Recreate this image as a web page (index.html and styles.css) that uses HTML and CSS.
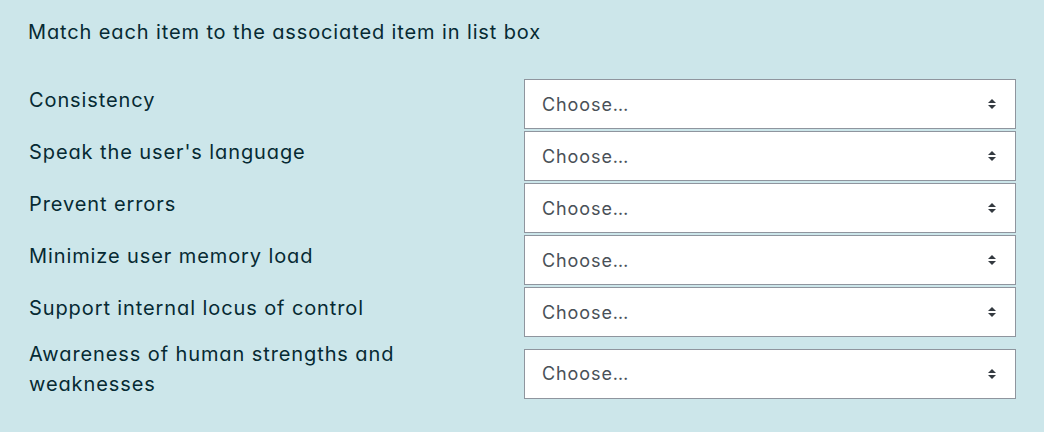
FILE: index.html
```html
<!DOCTYPE html>
<html lang="en">
<head>
<meta charset="utf-8">
<title>Match question</title>
<link rel="stylesheet" href="styles.css">
</head>
<body>
<div class="que">
  <div class="qtext">Match each item to the associated item in list box</div>
  <div class="answers">
    <div class="row">
      <div class="label">Consistency</div>
      <div class="select"><span class="value">Choose…</span><svg class="arrows" width="8" height="10" viewBox="0 0 4 5"><path d="M2 0L0 2h4zm0 5L0 3h4z"/></svg></div>
    </div>
    <div class="row">
      <div class="label">Speak the user's language</div>
      <div class="select"><span class="value">Choose…</span><svg class="arrows" width="8" height="10" viewBox="0 0 4 5"><path d="M2 0L0 2h4zm0 5L0 3h4z"/></svg></div>
    </div>
    <div class="row">
      <div class="label">Prevent errors</div>
      <div class="select"><span class="value">Choose…</span><svg class="arrows" width="8" height="10" viewBox="0 0 4 5"><path d="M2 0L0 2h4zm0 5L0 3h4z"/></svg></div>
    </div>
    <div class="row">
      <div class="label">Minimize user memory load</div>
      <div class="select"><span class="value">Choose…</span><svg class="arrows" width="8" height="10" viewBox="0 0 4 5"><path d="M2 0L0 2h4zm0 5L0 3h4z"/></svg></div>
    </div>
    <div class="row">
      <div class="label">Support internal locus of control</div>
      <div class="select"><span class="value">Choose…</span><svg class="arrows" width="8" height="10" viewBox="0 0 4 5"><path d="M2 0L0 2h4zm0 5L0 3h4z"/></svg></div>
    </div>
    <div class="row">
      <div class="label">Awareness of human strengths and weaknesses</div>
      <div class="select"><span class="value">Choose…</span><svg class="arrows" width="8" height="10" viewBox="0 0 4 5"><path d="M2 0L0 2h4zm0 5L0 3h4z"/></svg></div>
    </div>
  </div>
</div>
</body>
</html>
```

FILE: styles.css
```css
html, body {
  margin: 0;
  padding: 0;
}
body {
  background: #cce6ea;
  font-family: Inter, "Noto Sans", sans-serif;
  font-feature-settings: "cv11";
  color: #062a33;
}
.que {
  width: 1044px;
  height: 432px;
  box-sizing: border-box;
  padding: 17px 28px 0 28px;
}
.qtext {
  font-size: 20px;
  letter-spacing: 0.88px;
  line-height: 30px;
}
.answers {
  margin-top: 31px;
  display: flex;
  flex-direction: column;
}
.row {
  display: flex;
  align-items: center;
  padding: 1px 0;
}
.label {
  flex: 0 0 379px;
  margin-right: 116px;
  padding-left: 1px;
  padding-bottom: 9px;
  font-size: 20px;
  letter-spacing: 0.9px;
  line-height: 30px;
}
.select {
  box-sizing: border-box;
  width: 492px;
  height: 50px;
  background: #fff;
  border: 1px solid #8f959e;
  display: flex;
  align-items: center;
  justify-content: space-between;
  padding: 0 19px 0 17px;
}
.value {
  font-size: 18px;
  letter-spacing: 0.9px;
  color: #495057;
}
.arrows {
  fill: #343a40;
  display: block;
}
```
